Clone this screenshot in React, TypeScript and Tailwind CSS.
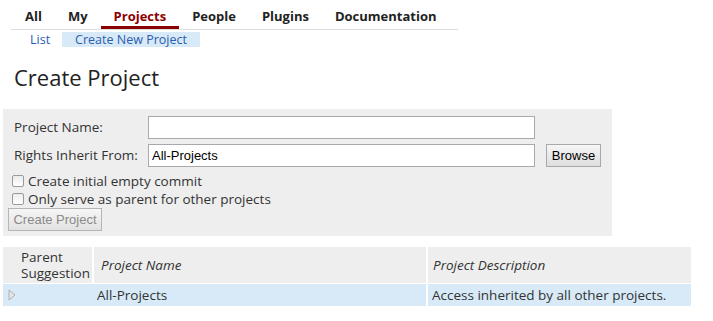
import React from "react";

const sans = "font-['Segoe_UI','Open_Sans',sans-serif]";
const arial = "font-['Liberation_Sans',Arial,sans-serif]";

const topNav = ["All", "My", "Projects", "People", "Plugins", "Documentation"];

function Checkbox({ label }: { label: string }) {
  return (
    <label className="flex h-[18px] items-center gap-[4px]">
      <span className="ml-[9px] h-[12px] w-[12px] rounded-[2px] border border-[#9a9a9a] bg-gradient-to-b from-[#ececec] to-[#ffffff]" />
      <span className="text-[13.5px] text-[#333]">{label}</span>
    </label>
  );
}

export default function App() {
  return (
    <div className={`${sans} min-h-[321px] w-[713px] bg-white text-[#333]`}>
      <div className="ml-[11px] w-[447px] border-b border-[#ddd]">
        <div className="flex h-[29px] pl-[1px]">
          {topNav.map((item) => (
            <div
              key={item}
              className={`flex items-end border-b-[3px] px-[13px] pb-[3px] text-[13px] font-bold ${
                item === "Projects" ? "border-[#8b0000] text-[#8b0000]" : "border-transparent text-[#222]"
              }`}
            >
              <span className="leading-[14px]">{item}</span>
            </div>
          ))}
        </div>
      </div>
      <div className="ml-[18px] mt-[2px] flex h-[15px] text-[12.5px] leading-[15px]">
        <span className="px-[12px] text-[#2a5db0]">List</span>
        <span className="bg-[#d8eaf7] px-[13px] text-[#2a5db0]">Create New Project</span>
      </div>
      <h1 className="ml-[14px] mt-[18px] text-[22px] leading-[24px] font-normal text-[#222]">Create Project</h1>

      <div className="ml-[3px] mt-[20px] w-[609px] bg-[#eeeeee] pb-[5px] pl-[5px] pt-[7px]">
        <div className="flex h-[23px] items-center">
          <span className="w-[140px] pl-[6px] text-[13.5px]">Project Name:</span>
          <input className={`${arial} h-[23px] w-[387px] border border-[#a9a9a9] bg-white px-[3px] text-[13px] text-black`} />
        </div>
        <div className="mt-[5px] flex h-[23px] items-center">
          <span className="w-[140px] pl-[6px] text-[13.5px]">Rights Inherit From:</span>
          <input
            defaultValue="All-Projects"
            className={`${arial} h-[23px] w-[387px] border border-[#a9a9a9] bg-white px-[3px] text-[13px] text-black`}
          />
          <button className={`${arial} ml-[11px] h-[23px] w-[55px] border border-[#a9a9a9] bg-gradient-to-b from-[#f6f6f6] to-[#dedede] text-[13px] text-black`}>
            Browse
          </button>
        </div>
        <div className="mt-[5px] -ml-[5px]">
          <Checkbox label="Create initial empty commit" />
          <Checkbox label="Only serve as parent for other projects" />
        </div>
        <button className={`${arial} block h-[23px] w-[94px] border border-[#b5b5b5] bg-gradient-to-b from-[#f6f6f6] to-[#e2e2e2] text-[13px] text-[#8a8a8a]`}>
          Create Project
        </button>
      </div>

      <table className="ml-[3px] mt-[11px] w-[688px] border-collapse text-[13.5px]">
        <thead>
          <tr className="h-[36px] bg-[#eeeeee]">
            <th className="w-[90px] border-r-2 border-white pl-[18px] text-left align-middle text-[13.5px] leading-[16px] font-normal">
              Parent Suggestion
            </th>
            <th className="w-[334px] border-r-2 border-white pl-[7px] text-left align-middle italic font-normal">Project Name</th>
            <th className="pl-[5px] text-left align-middle italic font-normal">Project Description</th>
          </tr>
        </thead>
        <tbody>
          <tr className="h-[23px] border-t border-white bg-[#d8eaf7]">
            <td className="pl-[5px] align-middle">
              <svg width="8" height="12" viewBox="0 0 8 12" className="block">
                <path d="M1 1 L7 6 L1 11 Z" fill="#e6e6e6" stroke="#b0b0b0" strokeWidth="1" />
              </svg>
            </td>
            <td className="border-r-2 border-white pl-[4px] align-middle">All-Projects</td>
            <td className="pl-[4px] align-middle">Access inherited by all other projects.</td>
          </tr>
        </tbody>
      </table>
    </div>
  );
}
